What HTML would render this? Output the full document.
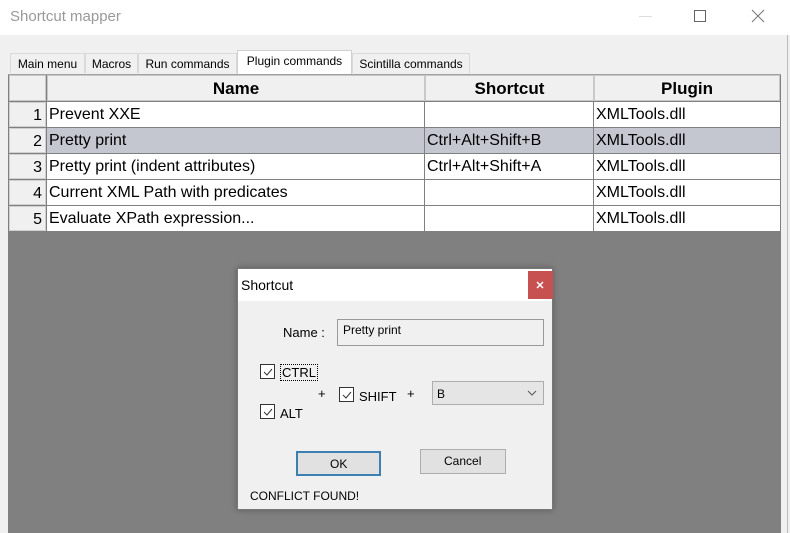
<!DOCTYPE html>
<html><head><style>
*{box-sizing:border-box;margin:0;padding:0}
body{width:790px;height:533px;background:#f0f0f0;font-family:"Liberation Sans",sans-serif;position:relative;overflow:hidden}
.abs{position:absolute}
.title{left:0;top:0;width:790px;height:35px;background:#fff;}
.tab{position:absolute;top:53px;height:20px;font-size:12px;color:#000;border:1px solid #d9d9d9;border-bottom:none;background:#f0f0f0;padding:3px 0 0 0;text-align:center}
.grid{left:8px;top:74px;width:773px;height:459px;background:#808080;border-top:1px solid #a0a0a0}
.cell{position:absolute;height:25px;font-size:16px;line-height:25px;white-space:nowrap;overflow:hidden}
.hd{background:#f0f0f0;border:1px solid #c8c8c8;font-weight:bold;text-align:center;font-size:17px}
.rn{background:#f0f0f0;text-align:right;padding-right:3px;border:1px solid #d0d0d0}
.c{background:#fff;padding-left:2px}
.sel{background:#c4c6d0}
.dlg{left:237px;top:268px;width:316px;height:242px;background:#f0f0f0;border:1px solid #777;box-shadow:0 0 6px rgba(0,0,0,.3)}
.cb{position:absolute;width:15px;height:15px;border:1px solid #333;background:#fff}
.cb svg{position:absolute;left:1px;top:1px}
.t{position:absolute;font-size:12px;color:#000}
</style></head><body>
<div class="abs title"></div>
<div class="abs" style="left:10px;top:8px;font-size:15px;color:#999">Shortcut mapper</div>
<div class="abs" style="left:639px;top:16px;width:13px;height:1px;background:#ddd"></div>
<div class="abs" style="left:694px;top:10px;width:12px;height:12px;border:1px solid #666"></div>
<svg class="abs" style="left:751px;top:9px" width="14" height="14"><path d="M1 1L13 13M13 1L1 13" stroke="#777" stroke-width="1"/></svg>

<div class="tab" style="left:10px;width:75px">Main menu</div>
<div class="tab" style="left:85px;width:53px">Macros</div>
<div class="tab" style="left:138px;width:99px">Run commands</div>
<div class="tab" style="left:237px;width:115px;top:50px;height:24px;background:#fff;border-color:#d0d0d0">Plugin commands</div>
<div class="tab" style="left:352px;width:118px">Scintilla commands</div>

<div class="abs grid"></div>
<div class="cell hd" style="left:9px;top:75px;width:37px;height:26px"></div>
<div class="cell hd" style="left:47px;top:75px;width:378px;height:26px">Name</div>
<div class="cell hd" style="left:425px;top:75px;width:169px;height:26px">Shortcut</div>
<div class="cell hd" style="left:594px;top:75px;width:186px;height:26px">Plugin</div>

<div class="cell rn" style="left:9px;top:102px;width:37px">1</div>
<div class="cell c" style="left:47px;top:102px;width:377px">Prevent XXE</div>
<div class="cell c" style="left:425px;top:102px;width:168px"></div>
<div class="cell c" style="left:594px;top:102px;width:186px">XMLTools.dll</div>

<div class="cell rn" style="left:9px;top:128px;width:37px">2</div>
<div class="cell c sel" style="left:47px;top:128px;width:377px">Pretty print</div>
<div class="cell c sel" style="left:425px;top:128px;width:168px">Ctrl+Alt+Shift+B</div>
<div class="cell c sel" style="left:594px;top:128px;width:186px">XMLTools.dll</div>

<div class="cell rn" style="left:9px;top:154px;width:37px">3</div>
<div class="cell c" style="left:47px;top:154px;width:377px">Pretty print (indent attributes)</div>
<div class="cell c" style="left:425px;top:154px;width:168px">Ctrl+Alt+Shift+A</div>
<div class="cell c" style="left:594px;top:154px;width:186px">XMLTools.dll</div>

<div class="cell rn" style="left:9px;top:180px;width:37px">4</div>
<div class="cell c" style="left:47px;top:180px;width:377px">Current XML Path with predicates</div>
<div class="cell c" style="left:425px;top:180px;width:168px"></div>
<div class="cell c" style="left:594px;top:180px;width:186px">XMLTools.dll</div>

<div class="cell rn" style="left:9px;top:206px;width:37px">5</div>
<div class="cell c" style="left:47px;top:206px;width:377px">Evaluate XPath expression...</div>
<div class="cell c" style="left:425px;top:206px;width:168px"></div>
<div class="cell c" style="left:594px;top:206px;width:186px">XMLTools.dll</div>

<div class="abs dlg">
 <div class="abs" style="left:0;top:0;width:314px;height:32px;background:#fff"></div>
 <div class="t" style="left:3px;top:8px;font-size:14px">Shortcut</div>
 <div class="abs" style="left:290px;top:2px;width:25px;height:28px;background:#c75050"></div>
 <svg class="abs" style="left:298px;top:12px" width="8" height="8"><path d="M1 1L7 7M7 1L1 7" stroke="#fff" stroke-width="1.5"/></svg>
 <div class="t" style="left:45px;top:56px;font-size:13px">Name :</div>
 <div class="abs" style="left:99px;top:50px;width:207px;height:27px;border:1px solid #999;background:#f0f0f0"></div>
 <div class="t" style="left:105px;top:54px">Pretty print</div>
 <div class="cb" style="left:22px;top:95px"><svg width="12" height="12"><path d="M2 6L5 9L10 3" stroke="#333" fill="none"/></svg></div>
 <div class="t" style="left:42px;top:95px;border:1px dotted #000;padding:0 1px;font-size:13px">CTRL</div>
 <div class="t" style="left:80px;top:117px;font-size:13px">+</div>
 <div class="cb" style="left:101px;top:118px"><svg width="12" height="12"><path d="M2 6L5 9L10 3" stroke="#333" fill="none"/></svg></div>
 <div class="t" style="left:121px;top:120px;font-size:13px">SHIFT</div>
 <div class="t" style="left:169px;top:117px;font-size:13px">+</div>
 <div class="abs" style="left:194px;top:112px;width:112px;height:24px;border:1px solid #adadad;background:#e5e5e5"></div>
 <div class="t" style="left:199px;top:118px">B</div>
 <svg class="abs" style="left:289px;top:121px" width="10" height="6"><path d="M1 1L5 5L9 1" stroke="#555" fill="none"/></svg>
 <div class="cb" style="left:22px;top:135px"><svg width="12" height="12"><path d="M2 6L5 9L10 3" stroke="#333" fill="none"/></svg></div>
 <div class="t" style="left:42px;top:137px;font-size:13px">ALT</div>
 <div class="abs" style="left:58px;top:182px;width:85px;height:25px;border:2px solid #3c7fb1;background:#e1e1e1"></div>
 <div class="t" style="left:92px;top:188px">OK</div>
 <div class="abs" style="left:182px;top:180px;width:86px;height:25px;border:1px solid #adadad;background:#e1e1e1"></div>
 <div class="t" style="left:206px;top:185px">Cancel</div>
 <div class="t" style="left:12px;top:220px;font-size:12px">CONFLICT FOUND!</div>
</div>
<div class="abs" style="left:787px;top:35px;width:1px;height:498px;background:#bbb"></div>
</body></html>
